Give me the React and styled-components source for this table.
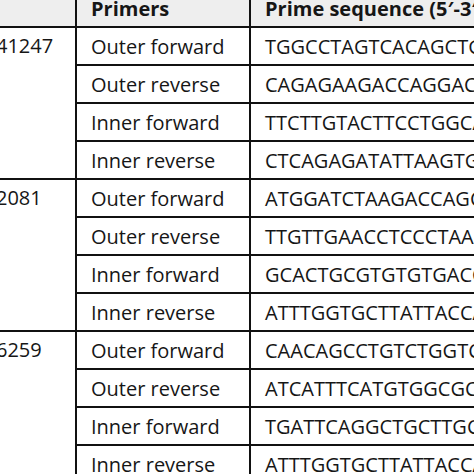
import React from 'react'
import styled, { createGlobalStyle } from 'styled-components'

const GlobalStyle = createGlobalStyle`
  html, body {
    margin: 0;
    padding: 0;
    background: #ffffff;
  }
  body {
    width: 474px;
    height: 474px;
    overflow: hidden;
    font-family: "Open Sans", "Noto Sans", sans-serif;
    color: #161616;
  }
`

const Frame = styled.div`
  width: 474px;
  height: 474px;
  overflow: hidden;
`

const Table = styled.table`
  margin-top: -10px;
  border-collapse: collapse;
  table-layout: fixed;
  width: 700px;
  font-size: 20px;
`

const HeadCell = styled.th`
  height: 36px;
  padding: 0 0 0 ${p => p.$pad ?? 14}px;
  text-align: left;
  font-weight: 700;
  background: #eeeeee;
  border-bottom: 2px solid #111;
  border-left: ${p => (p.$first ? 'none' : '2px solid #111')};
  white-space: nowrap;
  overflow: hidden;
`

const Cell = styled.td`
  height: 36px;
  padding: 0 0 0 14px;
  border-bottom: 2px solid #111;
  border-left: 2px solid #111;
  white-space: nowrap;
  overflow: hidden;
`

const GroupCell = styled.td`
  padding: 0;
  vertical-align: top;
  border-bottom: 2px solid #111;
  white-space: nowrap;
  overflow: hidden;
`

const GroupLabel = styled.div`
  height: 36px;
  line-height: 36px;
  margin-left: -4px;
`

const groups = [
  {
    id: '41247',
    rows: [
      ['Outer forward', 'TGGCCTAGTCACAGCTGCATTCAG'],
      ['Outer reverse', 'CAGAGAAGACCAGGACCTTGCAT'],
      ['Inner forward', 'TTCTTGTACTTCCTGGCAAGGTC'],
      ['Inner reverse', 'CTCAGAGATATTAAGTGGCAGCA'],
    ],
  },
  {
    id: '2081',
    rows: [
      ['Outer forward', 'ATGGATCTAAGACCAGCTTGGTA'],
      ['Outer reverse', 'TTGTTGAACCTCCCTAAGCTGCA'],
      ['Inner forward', 'GCACTGCGTGTGTGACCTGAAGT'],
      ['Inner reverse', 'ATTTGGTGCTTATTACCAGGCTT'],
    ],
  },
  {
    id: '6259',
    rows: [
      ['Outer forward', 'CAACAGCCTGTCTGGTCATCAGA'],
      ['Outer reverse', 'ATCATTTCATGTGGCGCTAGGAT'],
      ['Inner forward', 'TGATTCAGGCTGCTTGCAGAACT'],
      ['Inner reverse', 'ATTTGGTGCTTATTACCAGGCTT'],
    ],
  },
]

export default function App() {
  return (
    <Frame>
      <GlobalStyle />
      <Table>
        <colgroup>
          <col style={{ width: 76 }} />
          <col style={{ width: 174 }} />
          <col />
        </colgroup>
        <thead>
          <tr>
            <HeadCell $first $pad={0}></HeadCell>
            <HeadCell>Primers</HeadCell>
            <HeadCell>Prime sequence (5′-3′)</HeadCell>
          </tr>
        </thead>
        <tbody>
          {groups.map(group =>
            group.rows.map(([primer, seq], i) => (
              <tr key={group.id + primer}>
                {i === 0 && (
                  <GroupCell rowSpan={group.rows.length}>
                    <GroupLabel>{group.id}</GroupLabel>
                  </GroupCell>
                )}
                <Cell>{primer}</Cell>
                <Cell>{seq}</Cell>
              </tr>
            ))
          )}
        </tbody>
      </Table>
    </Frame>
  )
}
